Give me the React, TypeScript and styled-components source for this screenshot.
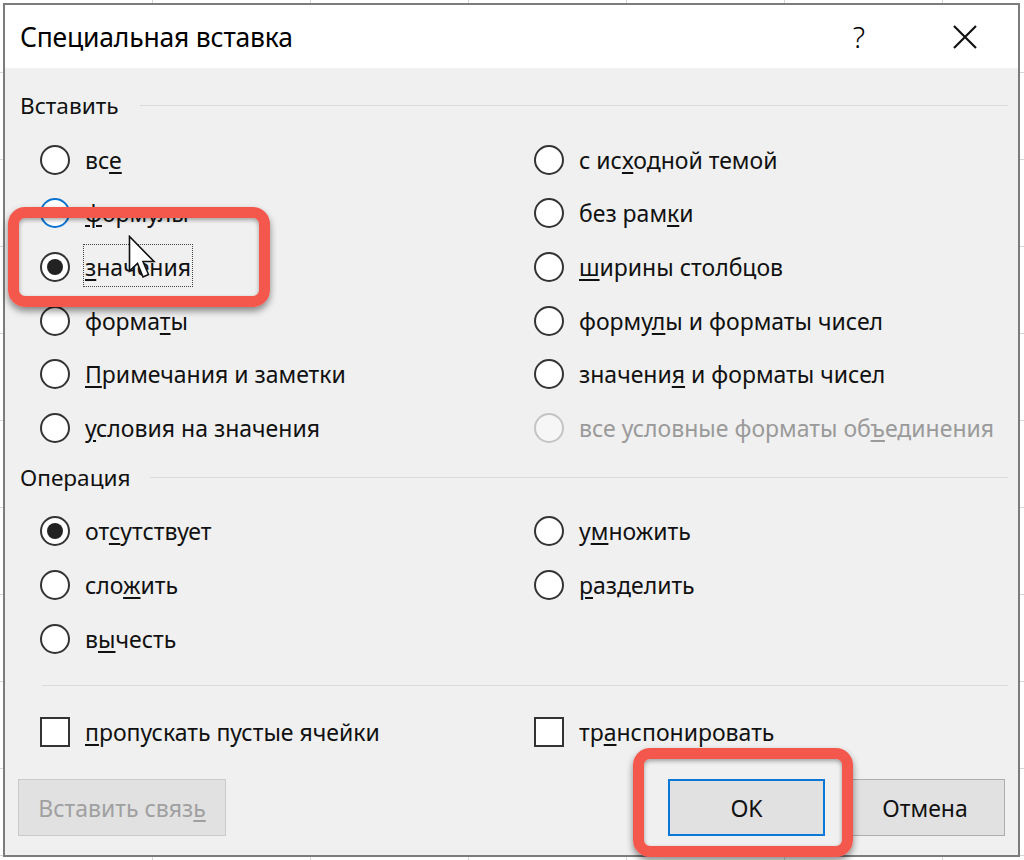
import styled, { createGlobalStyle, css } from "styled-components";

const GlobalStyle = createGlobalStyle`
  html, body {
    margin: 0;
    padding: 0;
  }
  body {
    width: 1024px;
    height: 860px;
    overflow: hidden;
    background-color: #fff;
    background-image:
      linear-gradient(to right, #d6d6d6 1px, transparent 1px),
      linear-gradient(to bottom, #d6d6d6 1px, transparent 1px);
    background-size: 158px 87px;
    background-position: 152px 0, 0 72px;
    font-family: "Noto Sans", "Open Sans", sans-serif;
    color: #111;
  }
`;

const Dialog = styled.div`
  position: relative;
  box-sizing: border-box;
  width: 1017px;
  height: 854px;
  margin: 3px 0 0 3px;
  border: 2px solid #7c7c7c;
  background: #f0f0f0;
  display: flex;
  flex-direction: column;
`;

const TitleBar = styled.div`
  height: 63px;
  background: #fff;
  display: flex;
  align-items: center;
  padding-left: 15px;
`;

const Title = styled.div`
  flex: 1;
  font-size: 26.5px;
  letter-spacing: -0.2px;
  color: #000;
`;

const TitleButton = styled.div`
  width: 106px;
  height: 63px;
  display: flex;
  align-items: center;
  justify-content: center;
  font-size: 29px;
  font-weight: 300;
  color: #000;
`;

const Content = styled.div`
  flex: 1;
  display: flex;
  flex-direction: column;
  padding: 0 10px 0 15px;
`;

const SectionHeader = styled.div<{ $top: number }>`
  display: flex;
  align-items: center;
  gap: 21px;
  height: 30px;
  margin-top: ${(p) => p.$top}px;
  font-size: 22.6px;
`;

const Rule = styled.div<{ $inset?: number }>`
  flex: 1;
  height: 1px;
  background: #dadada;
  margin-left: ${(p) => p.$inset ?? 0}px;
`;

const Options = styled.div<{ $top: number }>`
  display: grid;
  grid-template-columns: 494px 1fr;
  padding-left: 20px;
  margin-top: ${(p) => p.$top}px;
`;

const Column = styled.div`
  display: flex;
  flex-direction: column;
`;

const Row = styled.div<{ $h?: number }>`
  display: flex;
  align-items: center;
  gap: 15px;
  height: ${(p) => p.$h ?? 53.6}px;
  font-size: 23px;
`;

const Radio = styled.span<{ $checked?: boolean; $hover?: boolean; $disabled?: boolean }>`
  box-sizing: border-box;
  width: 30px;
  height: 30px;
  border-radius: 50%;
  border: 2.5px solid #333;
  background: #fff;
  display: flex;
  align-items: center;
  justify-content: center;
  flex: none;
  ${(p) => p.$hover && css`border-color: #0a74d0;`}
  ${(p) => p.$disabled && css`border-color: #c4c4c4; background: #f6f6f6;`}
  &::after {
    content: "";
    width: 16px;
    height: 16px;
    border-radius: 50%;
    background: #222;
    display: ${(p) => (p.$checked ? "block" : "none")};
  }
`;

const Check = styled.span`
  box-sizing: border-box;
  width: 30px;
  height: 30px;
  border: 2.5px solid #333;
  background: #fff;
  flex: none;
`;

const Label = styled.span<{ $disabled?: boolean; $focused?: boolean }>`
  position: relative;
  line-height: 30px;
  color: ${(p) => (p.$disabled ? "#9a9a9a" : "#111")};
  ${(p) =>
    p.$focused &&
    css`
      &::after {
        content: "";
        position: absolute;
        left: -2px;
        right: -2px;
        top: -8px;
        bottom: -5px;
        border: 1px dotted #444;
      }
    `}
`;

const Key = styled.u`
  text-decoration-thickness: 1.5px;
  text-underline-offset: 3px;
`;

const Divider = styled.div`
  height: 1px;
  background: #dadada;
  margin: 20px 0 0 22px;
`;

const ChecksRow = styled(Options)``;

const Buttons = styled.div`
  display: flex;
  align-items: flex-start;
  margin-top: 27px;
  padding: 0 3px 0 0;
  margin-left: -2px;
`;

const Button = styled.div<{ $w: number; $disabled?: boolean; $default?: boolean; $gap?: number }>`
  box-sizing: border-box;
  width: ${(p) => p.$w}px;
  height: 57px;
  margin-left: ${(p) => p.$gap ?? 0}px;
  display: flex;
  align-items: center;
  justify-content: center;
  font-size: 23px;
  background: #e1e1e1;
  border: 1px solid #adadad;
  color: #111;
  ${(p) => p.$disabled && css`color: #a0a0a0; border-color: #cacaca;`}
  ${(p) => p.$default && css`border: 2px solid #0a78d7;`}
`;

const Spacer = styled.div`
  flex: 1;
`;

const Highlight = styled.div<{ $x: number; $y: number; $w: number; $h: number }>`
  position: absolute;
  left: ${(p) => p.$x}px;
  top: ${(p) => p.$y}px;
  width: ${(p) => p.$w}px;
  height: ${(p) => p.$h}px;
  box-sizing: border-box;
  border: 11px solid #f4574c;
  border-radius: 17px;
  box-shadow: 0 4px 7px rgba(0, 0, 0, 0.45), inset 0 2px 4px rgba(0, 0, 0, 0.35);
  pointer-events: none;
`;

const Pointer = styled.svg`
  position: absolute;
  left: 123px;
  top: 230px;
`;

type Opt = {
  pre?: string;
  key?: string;
  post?: string;
  checked?: boolean;
  hover?: boolean;
  disabled?: boolean;
  focused?: boolean;
};

const pasteLeft: Opt[] = [
  { pre: "вс", key: "е" },
  { key: "ф", post: "ормулы", hover: true },
  { key: "з", post: "начения", checked: true, focused: true },
  { pre: "форма", key: "т", post: "ы" },
  { key: "П", post: "римечания и заметки" },
  { key: "у", post: "словия на значения" },
];

const pasteRight: Opt[] = [
  { pre: "с ис", key: "х", post: "одной темой" },
  { pre: "без рам", key: "к", post: "и" },
  { key: "ш", post: "ирины столбцов" },
  { pre: "форму", key: "л", post: "ы и форматы чисел" },
  { pre: "значени", key: "я", post: " и форматы чисел" },
  { pre: "все условные форматы об", key: "ъ", post: "единения", disabled: true },
];

const opLeft: Opt[] = [
  { pre: "от", key: "с", post: "утствует", checked: true },
  { pre: "сло", key: "ж", post: "ить" },
  { pre: "в", key: "ы", post: "честь" },
];

const opRight: Opt[] = [
  { pre: "у", key: "м", post: "ножить" },
  { key: "р", post: "азделить" },
];

function OptionText({ o }: { o: Opt }) {
  return (
    <Label $disabled={o.disabled} $focused={o.focused}>
      {o.pre}
      {o.key && <Key>{o.key}</Key>}
      {o.post}
    </Label>
  );
}

function RadioList({ items }: { items: Opt[] }) {
  return (
    <Column>
      {items.map((o, i) => (
        <Row key={i}>
          <Radio $checked={o.checked} $hover={o.hover} $disabled={o.disabled} />
          <OptionText o={o} />
        </Row>
      ))}
    </Column>
  );
}

function App() {
  return (
    <>
      <GlobalStyle />
      <Dialog>
        <TitleBar>
          <Title>Специальная вставка</Title>
          <TitleButton>?</TitleButton>
          <TitleButton>
            <svg width="24" height="24" viewBox="0 0 24 24">
              <path d="M1 1 L23 23 M23 1 L1 23" stroke="#111" strokeWidth="2.2" fill="none" />
            </svg>
          </TitleButton>
        </TitleBar>

        <Content>
          <SectionHeader $top={22}>
            Вставить
            <Rule />
          </SectionHeader>
          <Options $top={13}>
            <RadioList items={pasteLeft} />
            <RadioList items={pasteRight} />
          </Options>

          <SectionHeader $top={8}>
            Операция
            <Rule $inset={-2} />
          </SectionHeader>
          <Options $top={12}>
            <RadioList items={opLeft} />
            <RadioList items={opRight} />
          </Options>

          <Divider />

          <ChecksRow $top={26}>
            <Row $h={40}>
              <Check />
              <Label>
                <Key>п</Key>ропускать пустые ячейки
              </Label>
            </Row>
            <Row $h={40}>
              <Check />
              <Label>
                тр<Key>а</Key>нспонировать
              </Label>
            </Row>
          </ChecksRow>

          <Buttons>
            <Button $w={208} $disabled>
              <span>
                Вставить связ<Key>ь</Key>
              </span>
            </Button>
            <Spacer />
            <Button $w={157} $default>
              OK
            </Button>
            <Button $w={160} $gap={20}>
              Отмена
            </Button>
          </Buttons>
        </Content>

        <Highlight $x={3} $y={202} $w={262} $h={100} />
        <Highlight $x={628} $y={743} $w={220} $h={109} />

        <Pointer width="32" height="46" viewBox="0 0 32 46">
          <path
            d="M1.5 1.5 L1.5 36 L9.5 28.5 L15 42 L20.5 39.5 L15 26.5 L26 26.5 Z"
            fill="#fff"
            stroke="#111"
            strokeWidth="1.6"
            strokeLinejoin="miter"
          />
        </Pointer>
      </Dialog>
    </>
  );
}

export default App;
